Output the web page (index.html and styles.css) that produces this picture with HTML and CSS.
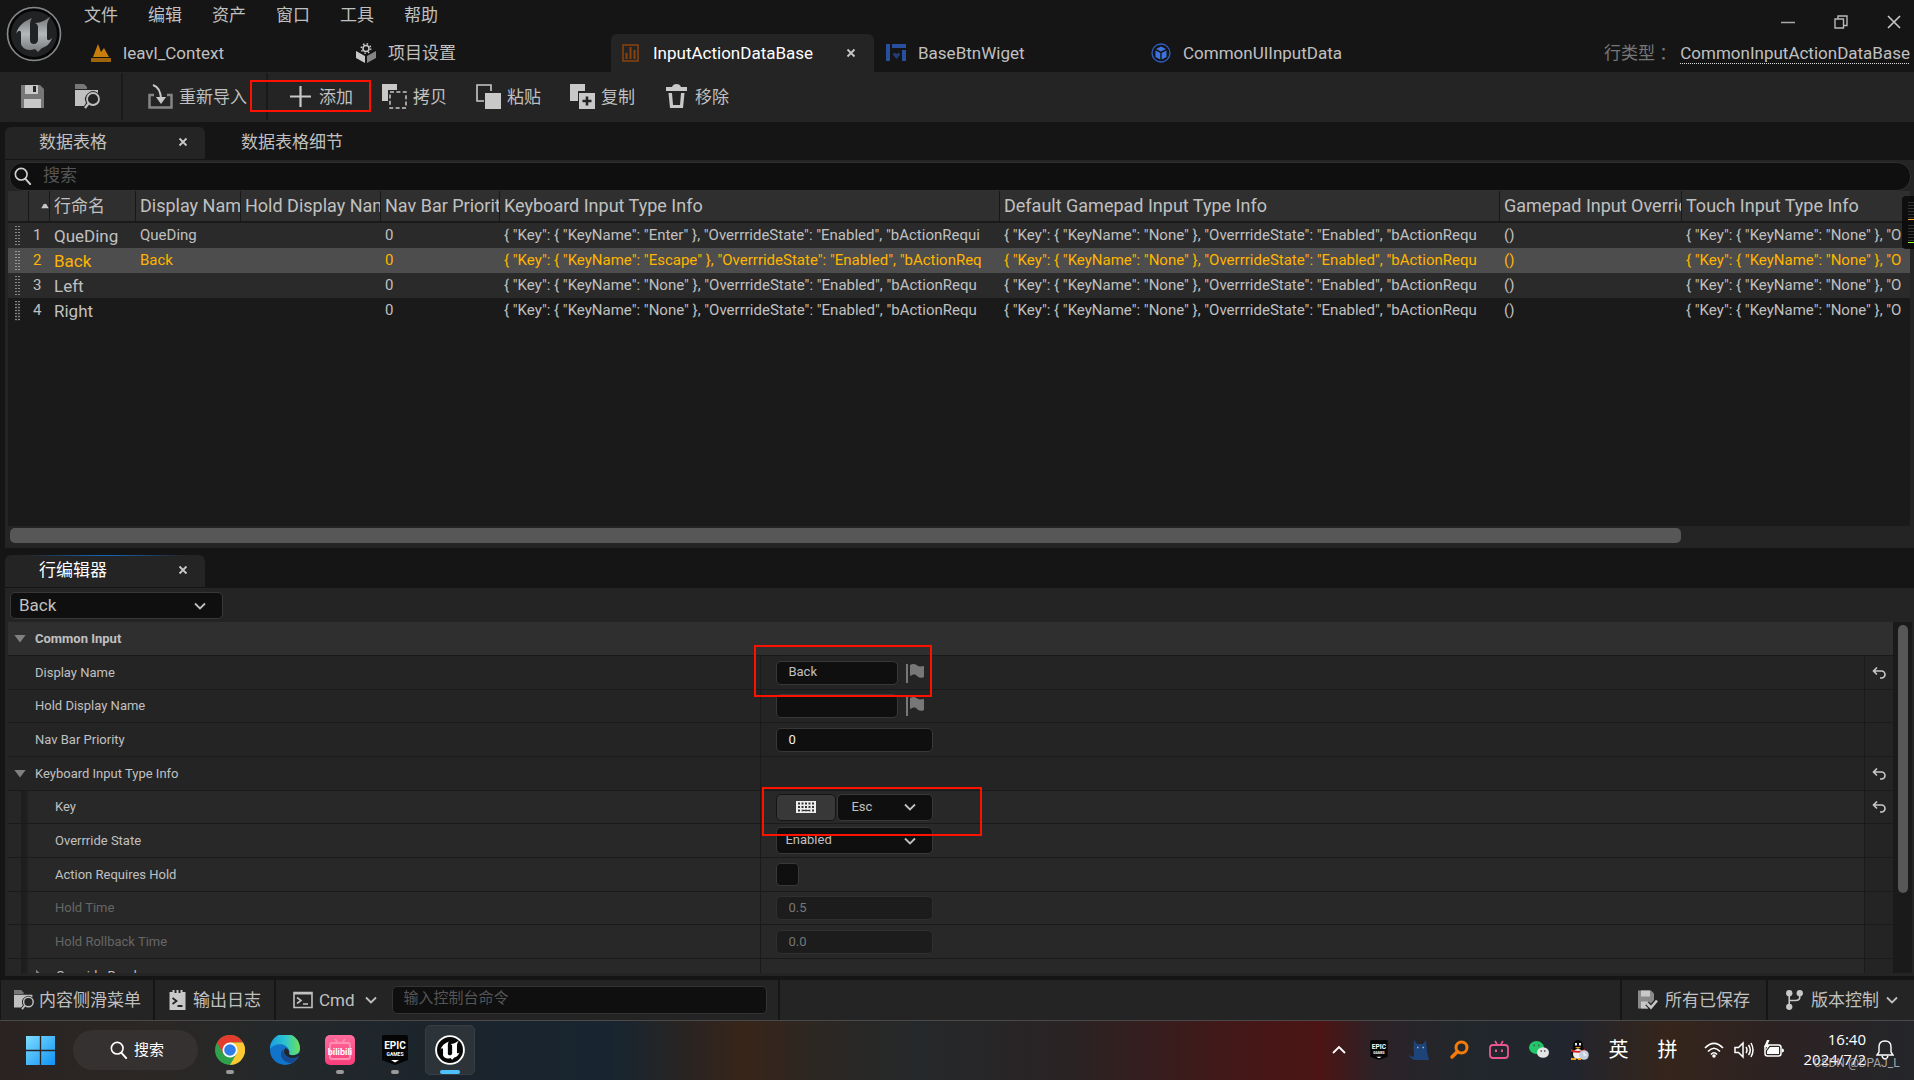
FILE: index.html
```html
<!DOCTYPE html>
<html lang="zh-CN">

<head>
	<meta charset="UTF-8">
	<meta name="viewport" content="width=device-width, initial-scale=1.0">
	<title>InputActionDataBase</title>
	<link rel="stylesheet" href="styles.css">
</head>

<body>
	<!-- 图标 -->
	<svg class="sprite" aria-hidden="true">
		<linearGradient id="metal" x1="0" y1="0" x2="0" y2="1">
			<stop offset="0" stop-color="#6f7375" />
			<stop offset=".5" stop-color="#b4b8ba" />
			<stop offset="1" stop-color="#75797b" />
		</linearGradient>
		<linearGradient id="win" x1="0" y1="0" x2="1" y2="1">
			<stop offset="0" stop-color="#7fdcff" />
			<stop offset="1" stop-color="#0f93f5" />
		</linearGradient>
		<linearGradient id="edge-a" x1="0" y1="0" x2="1" y2="0">
			<stop offset="0" stop-color="#1b9de2" />
			<stop offset=".5" stop-color="#2cc3d0" />
			<stop offset="1" stop-color="#6be35a" />
		</linearGradient>
		<linearGradient id="bili-bg" x1="0" y1="0" x2="0" y2="1">
			<stop offset="0" stop-color="#ff6c9c" />
			<stop offset="1" stop-color="#f93e7c" />
		</linearGradient>
		<symbol id="ue" viewBox="0 0 56 56">
			<path d="M10 28C12 20 18 15 26 12C24 15 24 17 24 20V34C24 37 26 38 28 38C30 38 32 36 32 34V21C32 19 31 18 29 17C35 17 40 14 45 10C42 14 41 17 41 20V32C41 35 43 35 46 32C44 38 40 41 36 42L32 46L29 43C22 46 16 42 15 38V27C15 24 12 24 10 28Z" />
		</symbol>
		<symbol id="chevron" viewBox="0 0 12 8"><path d="M1 1.5L6 6.5L11 1.5" fill="none" stroke="currentColor" stroke-width="1.8" /></symbol>
		<symbol id="cross" viewBox="0 0 10 10"><path d="M1.5 1.5L8.5 8.5M8.5 1.5L1.5 8.5" stroke="currentColor" stroke-width="1.8" /></symbol>
		<symbol id="search" viewBox="0 0 20 20"><path d="M12.5 13L18 19" stroke="currentColor" stroke-width="2.2" stroke-linecap="round" /><circle cx="8" cy="8" r="6.5" fill="none" stroke="currentColor" stroke-width="1.8" /></symbol>
		<symbol id="folder" viewBox="0 0 25 25">
			<path d="M0 0H9L12 3V5H0Z" fill="#777" />
			<path d="M0 6H23V9A8 8 0 0 0 11 19L9 22H0Z" fill="currentColor" />
			<circle cx="18" cy="15" r="6" fill="none" stroke="currentColor" stroke-width="1.8" />
			<path d="M13.500 19.500L10 24" stroke="currentColor" stroke-width="2.200" />
		</symbol>
		<symbol id="flag" viewBox="0 0 18 20"><path d="M1 1V20" stroke="#777" stroke-width="2" /><path d="M4 2C7 0 10 1 12 3C14 4 16 3 18 3V14C14 16 12 14 10 12C8 11 6 12 4 13Z" fill="#777" /></symbol>
		<symbol id="reset" viewBox="0 0 14 12"><path d="M5 .5L1.500 4L5 7.500M1.500 4H9.500A3.300 3.300 0 0 1 9.500 11H8" fill="none" stroke="currentColor" stroke-width="1.600" /></symbol>
		<symbol id="epic" viewBox="0 0 26 30">
			<path d="M2 0H24Q26 0 26 2V25L13 30L0 25V2Q0 0 2 0Z" fill="#050505" />
			<text x="13" y="14" text-anchor="middle" font-size="10" class="epic-name">EPIC</text>
			<text x="13" y="21" text-anchor="middle" font-size="5" class="epic-name">GAMES</text>
			<path d="M9 25H17L13 27.500Z" fill="#fff" />
		</symbol>
	</svg>

	<header class="titlebar">
		<svg class="logo" viewBox="0 0 56 56">
			<circle cx="28" cy="28" r="26.500" fill="#101010" stroke="#85898b" stroke-width="1.600" />
			<circle cx="28" cy="28" r="24" fill="#202224" stroke="#050505" stroke-width="2" />
			<use href="#ue" fill="url(#metal)" />
		</svg>
		<div class="title-main">
			<nav class="menu">
				<a href="#">文件</a>
				<a href="#">编辑</a>
				<a href="#">资产</a>
				<a href="#">窗口</a>
				<a href="#">工具</a>
				<a href="#">帮助</a>
			</nav>
			<nav class="tabs">
				<a href="#" class="tab">
					<svg class="tab-icon" viewBox="0 0 20 20"><path d="M0 15H20V19H0Z" fill="#a0650a" /><path d="M2 14L7 1L10 9L13 5L18 14Z" fill="#c97d0b" /></svg>leavl_Context
				</a>
				<a href="#" class="tab">
					<svg class="tab-icon" viewBox="0 0 20 20"><path d="M0 8L9 13V20L0 15Z" fill="#c8c8c8" /><path d="M20 8L11 13V20L20 15Z" fill="#858585" /><circle cx="10" cy="5.500" r="3" fill="none" stroke="#c8c8c8" stroke-width="1.500" /><circle cx="10" cy="5.500" r="4.700" fill="none" stroke="#c8c8c8" stroke-width="1.500" stroke-dasharray="1.500 2.200" /></svg>项目设置
				</a>
				<a href="#" class="tab active">
					<svg class="tab-icon" viewBox="0 0 20 20"><path d="M2 2H17V18H2Z" fill="none" stroke="#8a420d" stroke-width="1.500" /><path d="M5.500 16V10M9.500 16V4M13.500 16V7" stroke="#8a420d" stroke-width="2" /></svg>InputActionDataBase
					<svg class="close"><use href="#cross" /></svg>
				</a>
				<a href="#" class="tab">
					<svg class="tab-icon" viewBox="0 0 20 20"><path d="M0 1H4V18H0ZM6 1H20V5H6ZM16 7H20V18H16Z" fill="#284f9c" /><path d="M10.500 16L7 12Q7 9 9 10L10.500 11L12 10Q14 9 14 12Z" fill="#203d74" /></svg>BaseBtnWiget
				</a>
				<a href="#" class="tab">
					<svg class="tab-icon" viewBox="0 0 20 20"><circle cx="10" cy="10" r="9" fill="none" stroke="#2f5ec4" stroke-width="1.300" /><path d="M10 3.500L15 6L10 8.500L5 6ZM4.500 7.500L9.300 10V16.500L4.500 14ZM15.500 7.500L10.700 10V16.500L15.500 14Z" fill="#3f74e0" /></svg>CommonUIInputData
				</a>
			</nav>
		</div>
		<div class="title-side">
			<div class="window-buttons">
				<button aria-label="最小化"><svg viewBox="0 0 14 14"><path d="M0 7.500H14" stroke="#aaa" stroke-width="1.500" /></svg></button>
				<button aria-label="还原"><svg viewBox="0 0 14 14"><path d="M1 4H9.500V13H1ZM4 4V1H13V10.500H10" fill="none" stroke="#b8b8b8" stroke-width="1.400" /></svg></button>
				<button aria-label="关闭"><svg viewBox="0 0 14 14"><path d="M1 1L13 13M13 1L1 13" stroke="#c8c8c8" stroke-width="1.600" /></svg></button>
			</div>
			<div class="row-type">行类型 ：<a href="#">CommonInputActionDataBase</a></div>
		</div>
	</header>

	<div class="toolbar">
		<div class="tool-group files">
			<button aria-label="保存"><svg viewBox="0 0 25 25"><path d="M1 1H20L24 5V24H1Z" fill="#777" /><path d="M5 1H18V10H5ZM4 15H21V24H4Z" fill="#c8c8c8" /><path d="M13 2H16V8H13Z" fill="#242424" /></svg></button>
			<button aria-label="浏览"><svg><use href="#folder" /></svg></button>
		</div>
		<div class="tool-group import">
			<button><svg viewBox="0 0 25 25"><path d="M6 11H1.500V23.500H23.500V11H19" fill="none" stroke="#858585" stroke-width="2.500" /><path d="M5 1C11 3 13 8 13 16" fill="none" stroke="#c8c8c8" stroke-width="2" /><path d="M8 13H18L13 20Z" fill="#c8c8c8" /></svg>重新导入</button>
		</div>
		<div class="tool-group rows">
			<button class="mark mark-add"><svg viewBox="0 0 25 25"><path d="M12.500 2V23M2 12.500H23" stroke="#c8c8c8" stroke-width="2.200" /></svg>添加</button>
			<button><svg viewBox="0 0 25 25"><path d="M0 0H15V6H6V17H0Z" fill="#c8c8c8" /><path d="M8 8H24V24H8Z" fill="none" stroke="#c8c8c8" stroke-width="1.500" stroke-dasharray="4 2.400" /></svg>拷贝</button>
			<button><svg viewBox="0 0 25 25"><path d="M8 17H1V1H15V7" fill="none" stroke="#c8c8c8" stroke-width="1.600" /><path d="M9 9H25V25H9Z" fill="#c8c8c8" /></svg>粘贴</button>
			<button><svg viewBox="0 0 25 25"><path d="M0 0H15V7H8V17H0Z" fill="#c8c8c8" /><path d="M9 9H25V25H9Z" fill="#c8c8c8" /><path d="M17 12.500V21.500M12.500 17H21.500" stroke="#242424" stroke-width="2.600" /></svg>复制</button>
			<button><svg viewBox="0 0 25 25"><path d="M2 3H8Q9 0 12.500 0Q16 0 17 3H23V7H2ZM4.500 9H20.500L19 24H6Z" fill="#c8c8c8" /><path d="M8 9H17L16 21H9Z" fill="#242424" /></svg>移除</button>
		</div>
	</div>

	<main>
		<!-- 数据表格 -->
		<section class="dock dock-table">
			<div class="dock-tabs">
				<a href="#" class="dock-tab">数据表格<svg class="close"><use href="#cross" /></svg></a>
				<a href="#" class="dock-tab plain">数据表格细节</a>
			</div>
			<div class="dock-body">
				<label class="search-box">
					<svg><use href="#search" /></svg>
					<input type="text" placeholder="搜索" aria-label="搜索">
				</label>
				<div class="table-wrap">
					<table>
						<colgroup>
							<col class="c-grip"><col class="c-index"><col class="c-name"><col class="c-display"><col class="c-hold"><col class="c-nav"><col class="c-info"><col class="c-info"><col class="c-over"><col>
						</colgroup>
						<thead>
							<tr>
								<th></th>
								<th><svg class="sort" viewBox="0 0 10 8"><path d="M0 7L3 2Q5 0 7 2L10 7Z" fill="#c8c8c8" /></svg></th>
								<th class="name">行命名</th>
								<th>Display Name</th>
								<th>Hold Display Name</th>
								<th>Nav Bar Priority</th>
								<th>Keyboard Input Type Info</th>
								<th>Default Gamepad Input Type Info</th>
								<th>Gamepad Input Overrid</th>
								<th>Touch Input Type Info</th>
							</tr>
						</thead>
						<tbody>
							<tr>
								<td class="grip"><i></i></td>
								<td class="index">1</td>
								<td class="name">QueDing</td>
								<td><span>QueDing</span></td>
								<td></td>
								<td><span>0</span></td>
								<td><span>{ "Key": { "KeyName": "Enter" }, "OverrrideState": "Enabled", "bActionRequi</span></td>
								<td><span>{ "Key": { "KeyName": "None" }, "OverrrideState": "Enabled", "bActionRequ</span></td>
								<td><span>()</span></td>
								<td><span>{ "Key": { "KeyName": "None" }, "O</span></td>
							</tr>
							<tr class="selected">
								<td class="grip"><i></i></td>
								<td class="index">2</td>
								<td class="name">Back</td>
								<td><span>Back</span></td>
								<td></td>
								<td><span>0</span></td>
								<td><span>{ "Key": { "KeyName": "Escape" }, "OverrrideState": "Enabled", "bActionReq</span></td>
								<td><span>{ "Key": { "KeyName": "None" }, "OverrrideState": "Enabled", "bActionRequ</span></td>
								<td><span>()</span></td>
								<td><span>{ "Key": { "KeyName": "None" }, "O</span></td>
							</tr>
							<tr>
								<td class="grip"><i></i></td>
								<td class="index">3</td>
								<td class="name">Left</td>
								<td></td>
								<td></td>
								<td><span>0</span></td>
								<td><span>{ "Key": { "KeyName": "None" }, "OverrrideState": "Enabled", "bActionRequ</span></td>
								<td><span>{ "Key": { "KeyName": "None" }, "OverrrideState": "Enabled", "bActionRequ</span></td>
								<td><span>()</span></td>
								<td><span>{ "Key": { "KeyName": "None" }, "O</span></td>
							</tr>
							<tr class="dark">
								<td class="grip"><i></i></td>
								<td class="index">4</td>
								<td class="name">Right</td>
								<td></td>
								<td></td>
								<td><span>0</span></td>
								<td><span>{ "Key": { "KeyName": "None" }, "OverrrideState": "Enabled", "bActionRequ</span></td>
								<td><span>{ "Key": { "KeyName": "None" }, "OverrrideState": "Enabled", "bActionRequ</span></td>
								<td><span>()</span></td>
								<td><span>{ "Key": { "KeyName": "None" }, "O</span></td>
							</tr>
						</tbody>
					</table>
				</div>
				<div class="scroll-x"><div class="thumb"></div></div>
			</div>
			<div class="meter"><i></i><i></i></div>
		</section>

		<!-- 行编辑器 -->
		<section class="dock dock-editor">
			<div class="dock-tabs">
				<a href="#" class="dock-tab focused">行编辑器<svg class="close"><use href="#cross" /></svg></a>
			</div>
			<div class="dock-body">
				<div class="row-picker">
					<span class="dropdown large">
						<select aria-label="行"><option>Back</option></select>
						<svg><use href="#chevron" /></svg>
					</span>
				</div>
				<div class="details">
					<div class="props">
						<h2 class="category"><i class="arrow"></i>Common Input</h2>
						<div class="prop-list">
							<div class="prop">
								<label for="display-name">Display Name</label>
								<div class="value"><span class="mark mark-name"><input type="text" id="display-name" class="short" value="Back"><svg class="flag"><use href="#flag" /></svg></span></div>
								<button class="reset" aria-label="重置"><svg><use href="#reset" /></svg></button>
							</div>
							<div class="prop">
								<label for="hold-name">Hold Display Name</label>
								<div class="value"><input type="text" id="hold-name" class="short"><svg class="flag"><use href="#flag" /></svg></div>
								<span class="reset"></span>
							</div>
							<div class="prop">
								<label for="priority">Nav Bar Priority</label>
								<div class="value"><input type="text" id="priority" class="bright" value="0"></div>
								<span class="reset"></span>
							</div>
							<div class="prop">
								<span class="group"><i class="arrow"></i>Keyboard Input Type Info</span>
								<div class="value"></div>
								<button class="reset" aria-label="重置"><svg><use href="#reset" /></svg></button>
							</div>
							<div class="prop child">
								<label for="key">Key</label>
								<div class="value">
									<span class="mark mark-key">
										<button class="key-button" aria-label="按键">
											<svg viewBox="0 0 20 12"><path d="M0 0H20V12H0Z" fill="#eee" /><path d="M2 2.500H18M2 6H18M2 9.500H18" stroke="#333" stroke-width="1.800" stroke-dasharray="2 1.500" /><path d="M5.500 9.500H14.500" stroke="#eee" stroke-width="2" /><path d="M6 9.500H14" stroke="#333" stroke-width="1.200" /></svg>
										</button>
										<span class="dropdown key"><select id="key"><option>Esc</option></select><svg><use href="#chevron" /></svg></span>
									</span>
								</div>
								<button class="reset" aria-label="重置"><svg><use href="#reset" /></svg></button>
							</div>
							<div class="prop child">
								<label for="state">Overrride State</label>
								<div class="value"><span class="dropdown"><select id="state"><option>Enabled</option></select><svg><use href="#chevron" /></svg></span></div>
								<span class="reset"></span>
							</div>
							<div class="prop child">
								<label for="requires-hold">Action Requires Hold</label>
								<div class="value"><input type="checkbox" id="requires-hold"></div>
								<span class="reset"></span>
							</div>
							<div class="prop child off">
								<label for="hold-time">Hold Time</label>
								<div class="value"><input type="text" id="hold-time" value="0.5" disabled></div>
								<span class="reset"></span>
							</div>
							<div class="prop child off">
								<label for="rollback">Hold Rollback Time</label>
								<div class="value"><input type="text" id="rollback" value="0.0" disabled></div>
								<span class="reset"></span>
							</div>
							<div class="prop child">
								<span class="group"><i class="arrow right"></i>Override Brush</span>
								<div class="value"></div>
								<span class="reset"></span>
							</div>
						</div>
					</div>
					<div class="scroll-y"><div class="thumb"></div></div>
				</div>
			</div>
		</section>
	</main>

	<footer class="statusbar">
		<button class="drawer"><svg class="s20"><use href="#folder" /></svg>内容侧滑菜单</button>
		<button class="log"><svg class="s16" viewBox="0 0 16 20"><path d="M0 2H3V0H5V3H7V0H9V3H11V0H13V2H16V20H0Z" fill="#c8c8c8" /><path d="M3 8L7 11L3 14M8 16H13" fill="none" stroke="#242424" stroke-width="1.800" /></svg>输出日志</button>
		<div class="console">
			<button><svg class="s20" viewBox="0 0 20 17"><path d="M1 1H19V16H1Z" fill="none" stroke="#c0c0c0" stroke-width="1.600" /><path d="M1 2H19" stroke="#c0c0c0" stroke-width="2" /><path d="M4 6L8 9L4 12M10 12.500H15" fill="none" stroke="#c0c0c0" stroke-width="1.600" /></svg>Cmd<svg class="chev"><use href="#chevron" /></svg></button>
			<input type="text" placeholder="输入控制台命令" aria-label="控制台命令">
		</div>
		<div class="filler"></div>
		<button class="saved"><svg class="s20" viewBox="0 0 20 19"><path d="M0 0H13L16 3V10L10 18H0Z" fill="#8a8a8a" /><path d="M3 0H12V6H3ZM3 11H10V18H3Z" fill="#c8c8c8" /><path d="M9 13L13 17L19 10" fill="none" stroke="#242424" stroke-width="5" /><path d="M9 13L13 17L19 10" fill="none" stroke="#c8c8c8" stroke-width="2.600" /></svg>所有已保存</button>
		<button class="source"><svg class="s16" viewBox="0 0 16 19"><circle cx="3" cy="3" r="3" fill="#c8c8c8" /><circle cx="13" cy="3" r="3" fill="#c8c8c8" /><circle cx="3" cy="16" r="3" fill="#c8c8c8" /><path d="M3 3V16M13 3V7Q13 10 9 10H3" fill="none" stroke="#c8c8c8" stroke-width="1.500" /></svg>版本控制<svg class="chev"><use href="#chevron" /></svg></button>
	</footer>

	<!-- 任务栏 -->
	<div class="taskbar">
		<div class="apps">
			<button class="start" aria-label="开始"><svg viewBox="0 0 30 30"><path d="M0 0H14.300V14.300H0ZM15.700 0H30V14.300H15.700ZM0 15.700H14.300V30H0ZM15.700 15.700H30V30H15.700Z" fill="url(#win)" /></svg></button>
			<button class="task-search"><svg><use href="#search" /></svg>搜索</button>
			<button class="app running" aria-label="Chrome">
				<svg viewBox="0 0 30 30"><circle cx="15" cy="15" r="15" fill="#2fa04b" /><path d="M2 7.500A15 15 0 0 1 28 7.500H15L8.500 18.800Z" fill="#e33b2e" /><path d="M28 7.500A15 15 0 0 1 15 30L21.500 18.800L15 7.500Z" fill="#fcc934" /><circle cx="15" cy="15" r="7.500" fill="#fff" /><circle cx="15" cy="15" r="5.800" fill="#2f7de9" /></svg>
			</button>
			<button class="app" aria-label="Edge">
				<svg viewBox="0 0 30 30"><circle cx="15" cy="15" r="15" fill="#1173ca" /><path d="M0 14A15 15 0 0 1 30 13C30 19 25 21 20 20C17 19 20 18 19 15C16 7 4 8 0 14Z" fill="url(#edge-a)" /><path d="M13 14C8 20 13 28 22 28Q26 27 28.500 22C24 25 14 24 13 14Z" fill="#144b92" /><path d="M15 13Q12 19 18 22Q24 25 29 21Q30 19 30 17C27 21 21 21 19 19C20 17 19 14 15 13Z" fill="#21262a" /></svg>
			</button>
			<button class="app running" aria-label="哔哩哔哩">
				<svg viewBox="0 0 30 30"><rect width="30" height="30" rx="5" fill="url(#bili-bg)" /><path d="M10 4L13 8M20 4L17 8M7 8H23Q25 8 25 10V22Q25 24 23 24H7Q5 24 5 22V10Q5 8 7 8Z" fill="none" stroke="#ff8db4" stroke-width="2" /><text x="15" y="20" text-anchor="middle" font-size="9" class="bili-name">bilibili</text></svg>
			</button>
			<button class="app running" aria-label="Epic Games"><svg><use href="#epic" /></svg></button>
			<button class="app running current" aria-label="Unreal Editor">
				<svg viewBox="0 0 56 56"><circle cx="28" cy="28" r="26" fill="#050505" stroke="#fff" stroke-width="3.500" /><use href="#ue" fill="#fff" /></svg>
			</button>
		</div>
		<div class="tray">
			<svg class="up" viewBox="0 0 14 8"><path d="M1 7L7 1L13 7" fill="none" stroke="#fff" stroke-width="1.800" /></svg>
			<svg class="tray-icon"><use href="#epic" /></svg>
			<svg class="tray-icon" viewBox="0 0 20 20"><path d="M5 0L8 4H14L17 0L18 12L20 20H5L2 18Q0 17 0 14Q2 18 5 16Q4 8 5 0Z" fill="#1d4379" /><path d="M8 7.500H9.500M13.500 7.500H15" stroke="#9cb4d4" stroke-width="1.500" /></svg>
			<svg class="tray-icon" viewBox="0 0 20 20"><circle cx="12.500" cy="7.500" r="5.500" fill="none" stroke="#f57c0a" stroke-width="3" /><path d="M8.500 11.500L3 17" stroke="#f57c0a" stroke-width="3.500" stroke-linecap="round" /></svg>
			<svg class="tray-icon" viewBox="0 0 20 20"><path d="M6 1L8 4M14 1L12 4M4 5H16Q19 5 19 8V15Q19 18 16 18H4Q1 18 1 15V8Q1 5 4 5Z" fill="none" stroke="#e8588f" stroke-width="1.800" /><path d="M7 9.500V12M13 9.500V12" stroke="#e8588f" stroke-width="2" /></svg>
			<svg class="tray-icon" viewBox="0 0 20 20"><ellipse cx="7.500" cy="7.500" rx="7.500" ry="6.500" fill="#21c766" /><ellipse cx="14" cy="12.500" rx="6" ry="5.300" fill="#e4e4e4" /><path d="M4.500 5.500H6M9 5.500H10.500M11.500 11H13M15 11H16.500" stroke="#455" stroke-width="1.500" /></svg>
			<svg class="tray-icon" viewBox="0 0 20 20"><ellipse cx="9" cy="12" rx="7" ry="7" fill="#111" /><ellipse cx="9" cy="14" rx="5" ry="5" fill="#eee" /><path d="M4 6Q4 0 9 0Q14 0 14 6V9H4Z" fill="#0a0a0a" /><path d="M7 3V5.500M11 3V5.500" stroke="#fff" stroke-width="1.800" /><path d="M6 7H12L9 9Z" fill="#f5a312" /><path d="M2 9Q9 13 16 9V11.500Q9 14 2 11.500Z" fill="#d81e20" /><path d="M2 19H7M9 19H12" stroke="#f5a312" stroke-width="2" /><circle cx="15" cy="15" r="4.800" fill="#c3cede" /><path d="M15 12V15H17.500" fill="none" stroke="#fff" /></svg>
			<div class="ime"><span>英</span><span>拼</span></div>
			<div class="system">
				<svg viewBox="0 0 20 20"><path d="M1 8Q10 -1 19 8M4 11.500Q10 5 16 11.500M7 14.500Q10 11 13 14.500" fill="none" stroke="#fff" stroke-width="1.700" /><circle cx="10" cy="16" r="1.800" fill="#fff" /></svg>
				<svg viewBox="0 0 20 20"><path d="M1 7.500H4.500L9 3V17L4.500 12.500H1ZM12 7Q14 10 12 13M14.500 5Q18 10 14.500 15M17 3Q21 10 17 17" fill="none" stroke="#fff" stroke-width="1.500" /></svg>
				<svg viewBox="0 0 20 20"><rect x="1" y="5" width="16" height="11" rx="2.500" fill="none" stroke="#fff" stroke-width="1.500" /><path d="M6 7H15V14H3V11Z" fill="#fff" /><path d="M18 8.500Q20 8.500 20 10.500Q20 12.500 18 12.500Z" fill="#fff" /><path d="M3 0L0 7H3L1 12L6 5H3.500L5.500 0Z" fill="#fff" /></svg>
			</div>
			<div class="clock"><time>16:40</time><time>2024/7/2</time><span class="watermark">CSDN @DPAJ_L</span></div>
			<svg class="bell" viewBox="0 0 18 20"><path d="M1 15H17L15 12V7Q15 1 9 1Q3 1 3 7V12ZM6 16Q7 19 9 19Q11 19 12 16" fill="none" stroke="#fff" stroke-width="1.400" /></svg>
		</div>
	</div>
</body>

</html>
```
FILE: styles.css
```css
* {
	box-sizing: border-box;
}

body {
	margin: 0;
	height: 100vh;
	overflow: hidden;
	display: flex;
	flex-direction: column;
	background: #151515;
	color: #c0c0c0;
	font-family: Roboto, "Noto Sans CJK SC", sans-serif;
	font-size: 17px;
	line-height: 24px;
}

a {
	color: inherit;
	text-decoration: none;
}

button,
input,
select {
	font: inherit;
	color: inherit;
	margin: 0;
}

button {
	display: flex;
	align-items: center;
	padding: 0;
	border: none;
	background: none;
	white-space: nowrap;
	cursor: pointer;
}

svg {
	display: block;
	flex: none;
}

.sprite {
	position: absolute;
	width: 0;
	height: 0;
}

.close {
	width: 10px;
	height: 10px;
	margin-left: auto;
}

/* 标题栏 */
.titlebar {
	display: flex;
	height: 72px;
	flex: none;
}

.logo {
	width: 56px;
	height: 56px;
	margin: 6px 19px 0 6px;
}

.title-main {
	flex: 1;
	display: flex;
	flex-direction: column;
	justify-content: space-between;
}

.menu {
	display: flex;
	gap: 30px;
	padding: 3px;
}

.tabs {
	display: flex;
	gap: 2px;
}

.tab {
	width: 263px;
	height: 38px;
	padding: 0 18px 0 10px;
	display: flex;
	align-items: center;
	border-radius: 6px 6px 0 0;
}

.tab.active {
	background: #242424;
	color: #fff;
}

.tab .close {
	color: #c8c8c8;
}

.tab-icon {
	width: 20px;
	height: 20px;
	margin-right: 12px;
}

.title-side {
	display: flex;
	flex-direction: column;
	justify-content: space-between;
	align-items: flex-end;
	padding: 15px 4px 7px 0;
}

.window-buttons {
	display: flex;
	gap: 39px;
	padding-right: 9px;
}

.window-buttons svg {
	width: 14px;
	height: 14px;
}

.row-type {
	display: flex;
	gap: 4px;
	color: #777;
}

.row-type a {
	color: #c0c0c0;
	text-decoration: underline dotted #ddd 1px;
	text-underline-offset: 4px;
	text-decoration-skip-ink: none;
}

/* 工具栏 */
.toolbar {
	display: flex;
	flex: none;
	height: 50px;
	padding: 1px 0 2px;
	background: #242424;
}

.tool-group {
	display: flex;
	align-items: center;
	border-right: 2px solid #1a1a1a;
}

.tool-group svg {
	width: 25px;
	height: 25px;
}

.tool-group button {
	gap: 6px;
}

.files {
	gap: 30px;
	padding: 0 21px 0 20px;
}

.import {
	padding: 0 19px 0 25px;
}

.rows {
	gap: 29px;
	padding-left: 20px;
	border: none;
}

/* 红框标注 */
.mark {
	position: relative;
	display: flex;
}

.mark::after {
	content: "";
	position: absolute;
	border: 2px solid #ff1100;
	pointer-events: none;
	z-index: 2;
}

.mark-add::after {
	inset: -4px -18px -3px -38px;
}

.mark-name::after {
	inset: -16px -8px -12px -22px;
}

.mark-key::after {
	inset: -7px -49px -15px -14px;
}

/* 面板 */
main {
	flex: 1;
	min-height: 0;
	display: flex;
	flex-direction: column;
	gap: 7px;
	padding: 5px 0 4px 5px;
}

.dock {
	flex: 1 1 0;
	display: flex;
	flex-direction: column;
	min-height: 0;
	position: relative;
}

.dock-tabs {
	display: flex;
	flex: none;
	height: 33px;
	padding-bottom: 1px;
}

.dock-tab {
	display: flex;
	align-items: center;
	width: 200px;
	padding: 0 17px 2px 34px;
	border-radius: 6px 6px 0 0;
	background: #242424;
}

.dock-tab.plain {
	padding-left: 36px;
	background: none;
}

.dock-tab.focused {
	color: #fff;
	background: linear-gradient(90deg, #242424 10%, #1268c4 50%, #242424 90%) top / 100% 1px no-repeat #242424;
}

.dock-tab .close {
	color: #c8c8c8;
}

.dock-body {
	flex: 1;
	min-height: 0;
	display: flex;
	flex-direction: column;
	background: #242424;
}

.search-box {
	display: flex;
	align-items: center;
	flex: none;
	gap: 11px;
	height: 29px;
	margin: 2px 3px 0 4px;
	padding: 0 4px 1px;
	background: #0f0f0f;
	border: 1px solid #303030;
	border-radius: 14px;
	color: #d0d0d0;
}

.search-box svg {
	width: 18px;
	height: 18px;
}

.search-box input {
	flex: 1;
	height: 24px;
	padding: 0 0 2px;
	background: none;
	border: none;
	outline: none;
}

::placeholder {
	color: #555;
	opacity: 1;
}

/* 表格 */
.table-wrap {
	flex: 1;
	overflow: hidden;
	margin: 0 4px 0 3px;
	background: #1a1a1a;
}

table {
	width: 100%;
	table-layout: fixed;
	border-collapse: separate;
	border-spacing: 0;
}

.c-grip {
	width: 21px;
}

.c-index {
	width: 21px;
}

.c-name {
	width: 86px;
}

.c-display {
	width: 105px;
}

.c-hold {
	width: 140px;
}

.c-nav {
	width: 119px;
}

.c-info {
	width: 500px;
}

.c-over {
	width: 182px;
}

th {
	height: 32px;
	padding: 0 0 1px 4px;
	overflow: hidden;
	white-space: nowrap;
	text-align: left;
	font-size: 18px;
	font-weight: 400;
	background: #2f2f2f;
	border-right: 1px solid #181818;
	border-bottom: 2px solid #1a1a1a;
}

th.name {
	font-size: 17px;
}

th:last-child {
	border-right: none;
}

.sort {
	width: 8px;
	height: 6px;
	margin-left: auto;
}

td {
	height: 25px;
	padding: 0 5px 2px 4px;
	font-size: 15px;
	line-height: 20px;
	white-space: nowrap;
	background: #2a2a2a;
}

td span {
	display: block;
	overflow: hidden;
}

td:last-child {
	padding-right: 0;
}

td.name {
	padding: 1px 0 0 4px;
	font-size: 17px;
}

td.index {
	padding: 0 0 2px 4px;
}

td.grip {
	padding: 0 0 0 7px;
}

.grip i {
	display: block;
	width: 5px;
	height: 20px;
	background: repeating-linear-gradient(#0000 0 1px, #2a2a2a 1px 3px), linear-gradient(90deg, #888 2px, #0000 2px 3px, #888 3px);
}

.selected td {
	color: #ffb400;
	background: #4d4d4d;
}

.selected .grip i {
	background: repeating-linear-gradient(#0000 0 1px, #4d4d4d 1px 3px), linear-gradient(90deg, #999 2px, #0000 2px 3px, #999 3px);
}

.dark td {
	background: #1a1a1a;
}

.thumb {
	background: #575757;
	border-radius: 5px;
}

.scroll-x {
	flex: none;
	padding: 2px 5px 5px;
}

.scroll-x .thumb {
	width: 88%;
	height: 15px;
}

/* 窗口边缘的音量表 */
.meter {
	position: absolute;
	right: 0;
	top: 69px;
	width: 12px;
	padding: 6px 0 6px 6px;
	background: rgba(8, 8, 8, 0.85);
	border-radius: 4px 0 0 4px;
}

.meter i {
	display: block;
	height: 18px;
	margin-bottom: 5px;
	background: repeating-linear-gradient(#333 0 1px, #0000 1px 3px);
	border-bottom: 1px solid #ffa62b;
}

.meter i:last-child {
	margin-bottom: 0;
	border-color: #8cff2b;
}

/* 行编辑器 */
.row-picker {
	padding: 4px 5px 3px;
}

.dropdown {
	display: grid;
	grid-template-columns: 1fr 12px 16px;
	align-items: center;
	width: 157px;
	height: 27px;
	background: #0f0f0f;
	border: 1px solid #383838;
	border-radius: 5px;
}

.dropdown select {
	grid-area: 1 / 1 / 2 / 4;
	height: 25px;
	padding: 0 0 1px 8px;
	appearance: none;
	background: none;
	border: none;
	outline: none;
}

.dropdown svg {
	grid-area: 1 / 2;
	width: 12px;
	height: 8px;
	pointer-events: none;
}

.dropdown.large {
	width: 213px;
	font-size: 17px;
}

.dropdown.key {
	width: 96px;
}

.dropdown.key select {
	padding: 0 0 0 13px;
}

.details {
	flex: 1;
	min-height: 0;
	display: flex;
	padding: 0 2px 3px 3px;
	font-size: 13px;
	line-height: 18px;
}

.props {
	flex: 1;
	overflow: hidden;
}

.category {
	display: flex;
	align-items: center;
	height: 33px;
	margin: 0;
	font-size: 13px;
	font-weight: 700;
	background: #2f2f2f;
}

.arrow {
	width: 12px;
	height: 8px;
	margin: 0 9px 0 6px;
	background: #808080;
	clip-path: polygon(0 0, 100% 0, 50% 100%);
}

.arrow.right {
	width: 6px;
	height: 12px;
	margin: 0 14px 0 0;
	clip-path: polygon(0 0, 100% 50%, 0 100%);
}

.prop {
	display: grid;
	grid-template-columns: 15fr 22fr 29px;
	height: 34px;
	border-top: 1px solid #1a1a1a;
}

.prop:nth-child(3n + 2) {
	height: 33px;
}

.prop label {
	display: flex;
	align-items: center;
	padding-left: 27px;
}

.group {
	display: flex;
	align-items: center;
}

.child label {
	padding-left: 47px;
}

.child .group {
	padding-left: 28px;
}

.child {
	background: linear-gradient(90deg, #262626 13px, #1c1c1c 13px, #212121 20px, #282828 20px);
}

.off {
	color: #666;
}

.value,
.reset {
	border-left: 1px solid #1a1a1a;
}

.value {
	display: flex;
	align-items: center;
	padding-left: 15px;
}

.mark-name {
	align-items: center;
}

.value input[type="text"] {
	width: 157px;
	height: 24px;
	padding: 0 0 1px 11px;
	background: #0f0f0f;
	border: 1px solid #383838;
	border-radius: 5px;
	outline: none;
}

.value input.short {
	width: 122px;
	padding-bottom: 3px;
}

.value input.bright {
	color: #f0f0f0;
}

.value input:disabled {
	background: #1c1c1c;
	border-color: #2f2f2f;
	color: #777;
}

.value input[type="checkbox"] {
	width: 23px;
	height: 23px;
	appearance: none;
	background: #0f0f0f;
	border: 1px solid #383838;
	border-radius: 4px;
}

.flag {
	width: 18px;
	height: 20px;
	margin-left: 8px;
}

.mark-key {
	gap: 1px;
}

.key-button {
	justify-content: center;
	width: 60px;
	height: 27px;
	background: #383838;
	border: 1px solid #151515;
	border-radius: 5px;
}

.key-button svg {
	width: 20px;
	height: 12px;
}

.reset {
	background: #242424;
	color: #c8c8c8;
	justify-content: center;
}

.reset svg {
	width: 14px;
	height: 12px;
}

.scroll-y {
	width: 19px;
	padding: 3px 4px 0 5px;
	background: #1a1a1a;
}

.scroll-y .thumb {
	height: 77%;
}

/* 状态栏 */
.statusbar {
	display: flex;
	flex: none;
	height: 40px;
	padding-left: 1px;
	gap: 2px;
}

.statusbar > * {
	background: #242424;
}

.s20 {
	width: 20px;
	height: 20px;
}

.s16 {
	width: 17px;
	height: 20px;
}

.chev {
	width: 12px;
	height: 8px;
}

.drawer {
	gap: 5px;
	padding: 0 12px 0 13px;
}

.log {
	gap: 7px;
	padding: 0 13px 0 14px;
}

.console {
	display: flex;
	align-items: center;
	gap: 15px;
	padding: 0 11px 0 17px;
}

.console button {
	gap: 6px;
}

.console .chev {
	margin-left: 4px;
}

.console input {
	width: 375px;
	height: 28px;
	padding: 0 0 4px 11px;
	font-size: 15px;
	background: #0f0f0f;
	border: 1px solid #333;
	border-radius: 5px;
	outline: none;
}

.filler {
	flex: 1;
}

.saved {
	gap: 7px;
	padding: 0 16px;
}

.source {
	gap: 8px;
	padding: 0 16px 0 18px;
}

.source .chev {
	margin-left: -1px;
}

/* 任务栏 */
.taskbar {
	display: flex;
	justify-content: space-between;
	flex: none;
	height: 60px;
	padding-bottom: 1px;
	border-top: 1px solid #4a4a4a;
	background: linear-gradient(90deg, #2a2321 0, #2b2725 8%, #23282a 15%, #1b242d 24%, #182530 32%, #2a2421 36%, #38251a 39%, #2b2723 43%, #25282a 48%, #2a2324 56%, #421818 64%, #4c1414 69%, #2b2328 72%, #21272b 77%, #22252e 82%, #35251b 87%, #2c2223 93%, #24262a 100%);
	color: #fff;
	font-size: 15px;
}

.apps,
.tray {
	display: flex;
	align-items: center;
}

.apps {
	padding-left: 26px;
}

.start svg {
	width: 29px;
	height: 29px;
}

.task-search {
	gap: 6px;
	height: 40px;
	margin: 0 7px 0 18px;
	padding: 0 34px 0 37px;
	background: #353130;
	border-radius: 20px;
}

.task-search svg {
	width: 18px;
	height: 18px;
}

.app {
	position: relative;
	justify-content: center;
	width: 50px;
	height: 50px;
	margin-right: 5px;
	border-radius: 5px;
}

.app svg {
	width: 30px;
	height: 30px;
}

.app.running::after {
	content: "";
	position: absolute;
	bottom: 1px;
	width: 8px;
	height: 4px;
	border-radius: 2px;
	background: #999;
}

.app.current {
	background: #2c343a;
	border: 1px solid #363d43;
}

.app.current::after {
	width: 20px;
	bottom: 0;
	background: #4cc2ff;
}

.epic-name,
.bili-name {
	fill: #fff;
	font-family: Roboto, sans-serif;
	font-weight: 700;
}

.tray {
	padding-right: 20px;
}

.up {
	width: 14px;
	height: 8px;
	margin-right: 23px;
}

.tray-icon {
	width: 20px;
	height: 20px;
	margin-right: 20px;
}

.ime {
	display: flex;
	gap: 29px;
	margin-right: 26px;
	font-size: 20px;
}

.system {
	display: flex;
	gap: 10px;
	margin-right: 20px;
}

.system svg {
	width: 20px;
	height: 20px;
}

.clock {
	position: relative;
	display: flex;
	flex-direction: column;
	align-items: flex-end;
	padding-bottom: 3px;
	margin-right: 10px;
	font-family: "Open Sans", "Noto Sans CJK SC", sans-serif;
	line-height: 20px;
}

.watermark {
	position: absolute;
	left: 10px;
	top: 24px;
	color: rgba(200, 200, 200, 0.8);
	font-family: Roboto, sans-serif;
	font-size: 12px;
	white-space: nowrap;
}

.bell {
	width: 18px;
	height: 20px;
}
```
